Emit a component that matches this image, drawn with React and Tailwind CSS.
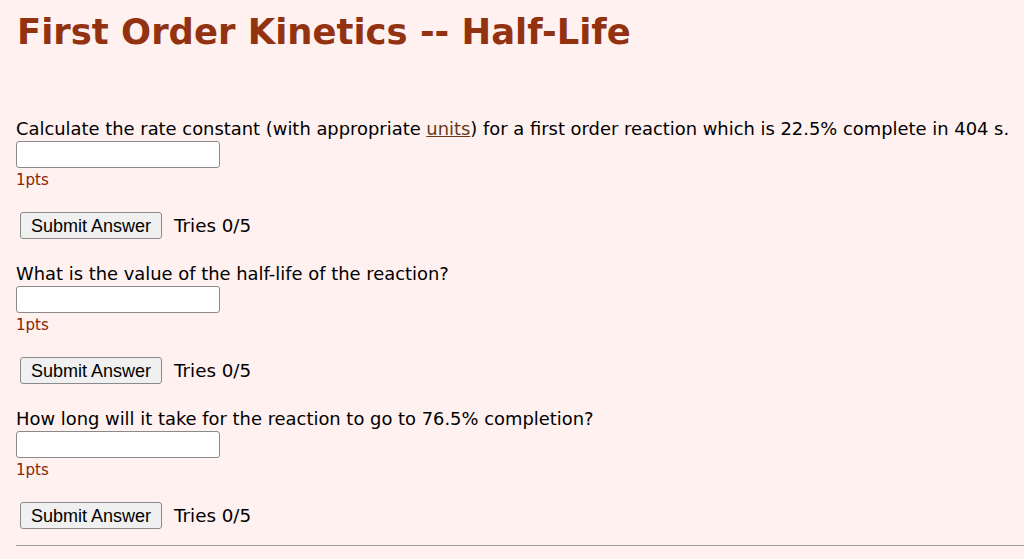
import React from 'react'

const questions = [
  {
    text: (
      <>
        Calculate the rate constant (with appropriate{' '}
        <a href="#" className="text-[#6b3a1b] underline">units</a>) for a first order reaction which is 22.5% complete in 404 s.
      </>
    ),
  },
  { text: 'What is the value of the half-life of the reaction?' },
  { text: 'How long will it take for the reaction to go to 76.5% completion?' },
]

function Question({ text }) {
  return (
    <div className="h-[145px]">
      <p className="text-[17.9px] leading-[20px] text-black whitespace-nowrap">{text}</p>
      <input
        type="text"
        className="mt-[2px] block w-[204px] h-[27px] bg-white border border-[#8a8a8a] rounded-[3px]"
      />
      <div className="mt-[4px] text-[15px] leading-[16px] text-[#8b2500]">1pts</div>
      <div className="mt-[24px] flex items-center ml-[4px]">
        <button className="h-[27px] px-[10px] bg-[#f0f0f0] border border-[#8a8a8a] rounded-[3px] text-[18px] text-black font-['Liberation_Sans',Arial,sans-serif]">
          Submit Answer
        </button>
        <span className="ml-[12px] text-[18.3px] text-black">Tries 0/5</span>
      </div>
    </div>
  )
}

export default function App() {
  return (
    <div className="min-h-screen bg-[#fef1ef] font-['DejaVu_Sans',Verdana,sans-serif] px-[16px] pt-[10px]">
      <h1 className="text-[35.4px] leading-[44px] font-bold text-[#933210] ml-[1px]">
        First Order Kinetics -- Half-Life
      </h1>
      <div className="mt-[65px]">
        {questions.map((q, i) => (
          <Question key={i} text={q.text} />
        ))}
      </div>
      <hr className="mt-[-9px] border-t border-[#a0a0a0] mr-[-16px]" />
    </div>
  )
}
